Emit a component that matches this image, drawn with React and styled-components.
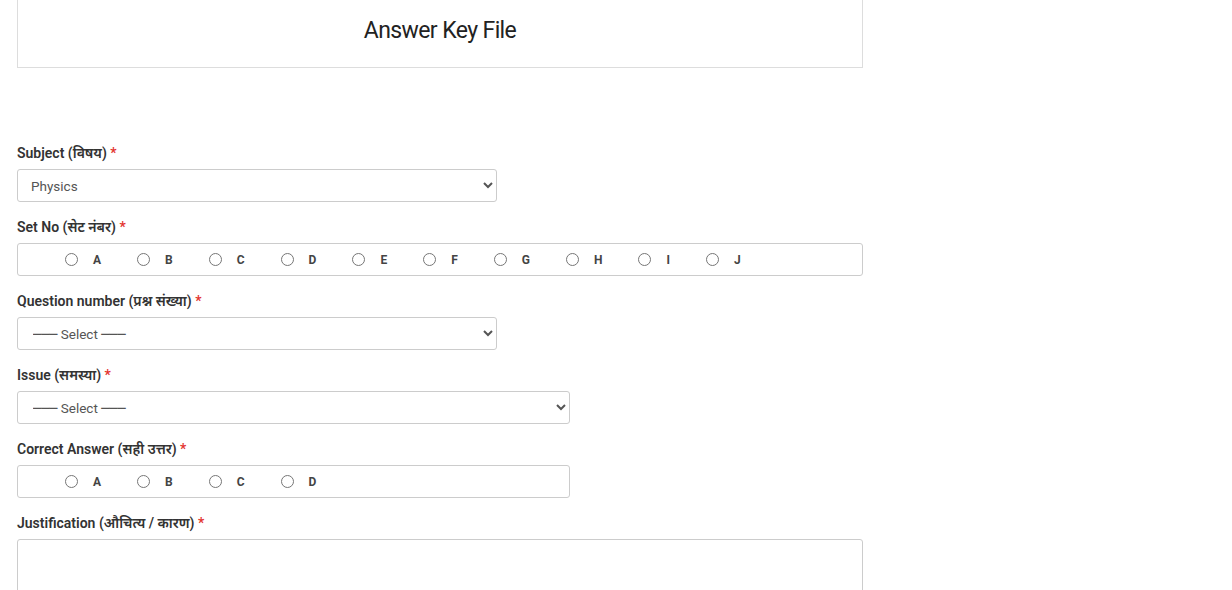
import React from 'react';
import styled, { createGlobalStyle } from 'styled-components';

const GlobalStyle = createGlobalStyle`
  body {
    margin: 0;
    background: #fff;
    font-family: Roboto, "Noto Sans", "Liberation Sans", sans-serif;
    color: #333;
  }
`;

const sets = ['A', 'B', 'C', 'D', 'E', 'F', 'G', 'H', 'I', 'J'];
const answers = ['A', 'B', 'C', 'D'];
const placeholder = '─── Select ───';

const RadioGroup = ({ name, options }) => (
  <RadioBox>
    {options.map((opt) => (
      <RadioItem key={opt}>
        <input type="radio" name={name} value={opt} />
        <span>{opt}</span>
      </RadioItem>
    ))}
  </RadioBox>
);

const App = () => {
  return (
    <Page>
      <GlobalStyle />
      <TitleCard>
        <Title>Answer Key File</Title>
      </TitleCard>

      <Form>
        <Field>
          <Label>Subject (विषय) <Required>*</Required></Label>
          <Select defaultValue="physics" $indent="9px">
            <option value="physics">Physics</option>
            <option value="chemistry">Chemistry</option>
          </Select>
        </Field>

        <Field $width="846px">
          <Label>Set No (सेट नंबर) <Required>*</Required></Label>
          <RadioGroup name="set" options={sets} />
        </Field>

        <Field>
          <Label>Question number (प्रश्न संख्या) <Required>*</Required></Label>
          <Select defaultValue="">
            <option value="">{placeholder}</option>
          </Select>
        </Field>

        <Field $width="553px">
          <Label>Issue (समस्या) <Required>*</Required></Label>
          <Select defaultValue="">
            <option value="">{placeholder}</option>
          </Select>
        </Field>

        <Field $width="553px">
          <Label>Correct Answer (सही उत्तर) <Required>*</Required></Label>
          <RadioGroup name="answer" options={answers} />
        </Field>

        <Field $width="846px">
          <Label>Justification (औचित्य / कारण) <Required>*</Required></Label>
          <TextArea rows={5} />
        </Field>
      </Form>
    </Page>
  );
};

const Page = styled.div`
  padding: 0 17px;
  width: 846px;
`;

const TitleCard = styled.div`
  height: 68px;
  border: 1px solid #ddd;
  border-top: 0;
  display: flex;
  align-items: center;
  justify-content: center;
  padding-bottom: 7px;
  box-sizing: border-box;
`;

const Title = styled.h2`
  margin: 0;
  font-size: 23px;
  font-weight: 400;
  color: #222;
  letter-spacing: -0.6px;
`;

const Form = styled.form`
  display: flex;
  flex-direction: column;
  gap: 15px;
  margin-top: 75px;
`;

const Field = styled.div`
  display: flex;
  flex-direction: column;
  gap: 6px;
  width: ${(p) => p.$width || '480px'};
`;

const Label = styled.label`
  font-size: 14px;
  font-weight: 600;
  line-height: 20px;
  color: #333;
`;

const Required = styled.span`
  color: #e3342f;
`;

const Select = styled.select`
  height: 33px;
  width: 100%;
  border: 1px solid #ccc;
  border-radius: 3px;
  padding: 0 11px 0 ${(p) => p.$indent || '11px'};
  font-family: Roboto, "DejaVu Sans", sans-serif;
  font-size: 13.5px;
  color: #555;
  background: #fff;
`;

const RadioBox = styled.div`
  height: 33px;
  box-sizing: border-box;
  border: 1px solid #ccc;
  border-radius: 3px;
  display: flex;
  align-items: center;
  padding-left: 42px;
`;

const RadioItem = styled.label`
  display: flex;
  align-items: center;
  font-size: 12px;
  font-weight: 700;
  color: #444;
  margin-right: 31px;

  input {
    margin: 0 15px 0 5px;
  }
`;

const TextArea = styled.textarea`
  height: 100px;
  border: 1px solid #ccc;
  border-radius: 3px;
  resize: vertical;
  font-family: Roboto, sans-serif;
  font-size: 14px;
`;

export default App;
